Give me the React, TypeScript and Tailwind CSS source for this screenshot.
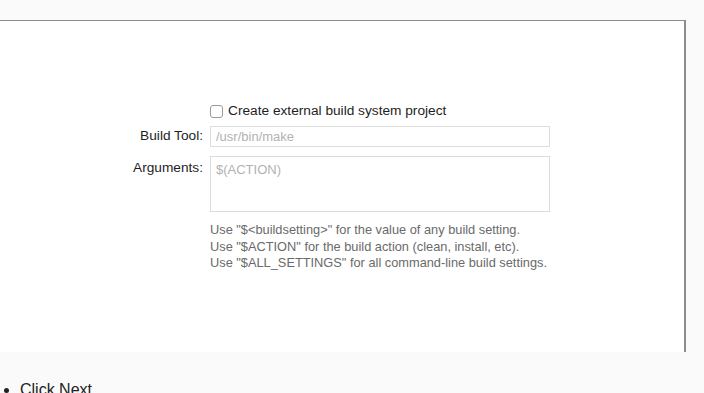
export default function App() {
  return (
    <div className="min-h-[393px] w-[704px] overflow-hidden bg-[#fafafa] font-['Liberation_Sans',Arial,sans-serif]">
      <div className="mt-5 h-[332px] w-[686px] border-t border-r-2 border-[#8c8c8c] bg-white">
        <div className="grid grid-cols-[203px_340px] gap-x-[7px] pt-[83px] text-[13.7px] text-[#1e1e1e]">
          <div />
          <label className="flex h-[15px] items-center gap-[5px] whitespace-nowrap">
            <span className="h-[13px] w-[13px] shrink-0 rounded-[3px] border border-[#9a9a9a] bg-white" />
            <span>Create external build system project</span>
          </label>

          <div className="mt-[7px] flex h-[21px] items-center justify-end">Build Tool:</div>
          <div className="mt-[7px] flex h-[21px] items-center border border-[#dcdcdc] px-[5px] text-[13px] text-[#b2b2b2]">
            /usr/bin/make
          </div>

          <div className="mt-[9px] pt-[2px] text-right">Arguments:</div>
          <div className="mt-[9px] h-[56px] border border-[#dcdcdc] px-[5px] pt-[3px] text-[13px] text-[#b2b2b2]">
            $(ACTION)
          </div>

          <div />
          <div className="mt-[10px] whitespace-nowrap text-[12.8px] leading-[16.5px] text-[#6a6a6a]">
            <p>Use "$&lt;buildsetting&gt;" for the value of any build setting.</p>
            <p>Use "$ACTION" for the build action (clean, install, etc).</p>
            <p>Use "$ALL_SETTINGS" for all command-line build settings.</p>
          </div>
        </div>
      </div>
      <ul className="mt-[26px] list-disc pl-[20px] text-[16px] text-[#222]">
        <li>Click Next</li>
      </ul>
    </div>
  );
}
